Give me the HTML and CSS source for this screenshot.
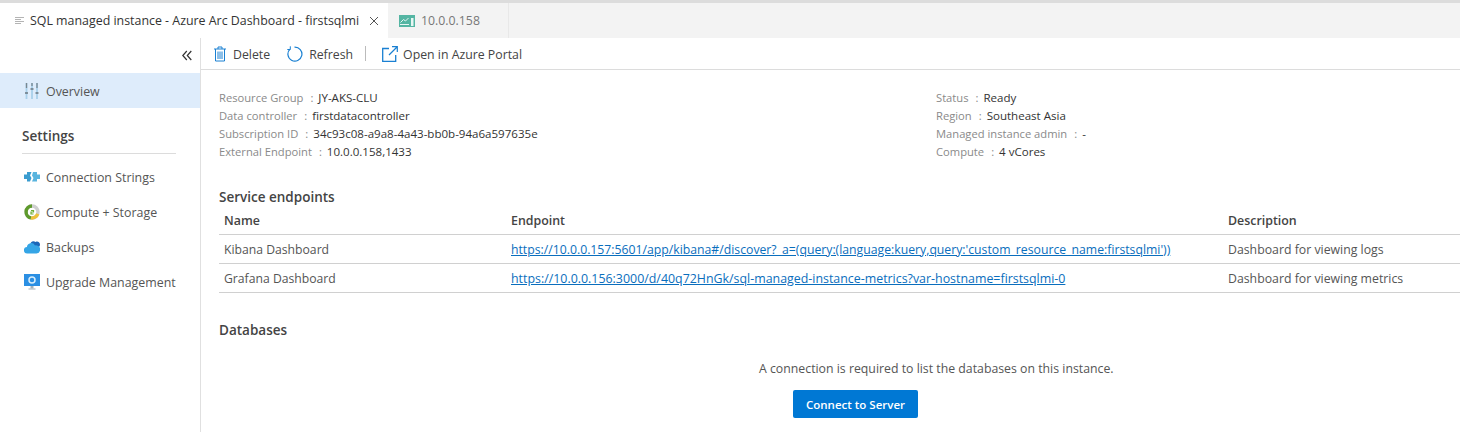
FILE: index.html
```html
<!DOCTYPE html>
<html lang="en">
<head>
<meta charset="utf-8">
<title>SQL managed instance</title>
<link rel="stylesheet" href="styles.css">
</head>
<body>
<div class="tabs">
  <div class="tab active">
    <svg class="tab-ico" width="10" height="8" viewBox="0 0 10 8"><path d="M0 .5h9M0 2.500h6M0 4.500h9M0 6.500h6" stroke="#b4b4b4" fill="none"/></svg>
    <span>SQL managed instance - Azure Arc Dashboard - firstsqlmi</span>
    <svg class="tab-x" width="10" height="10" viewBox="0 0 10 10"><path d="M1 1l8 8M9 1l-8 8" stroke="#555" fill="none"/></svg>
  </div>
  <div class="tab inactive">
    <svg width="16" height="12" viewBox="0 0 16 12"><rect width="16" height="12" fill="#55b5a3"/><path d="M1.500 7.500l3-3 2 1.500 3-3" stroke="#e8f6f3" fill="none"/><path d="M1 9.500h9" stroke="#e8f6f3"/><path d="M12 3h2.500v8H12z" fill="#e8f6f3"/></svg>
    <span>10.0.0.158</span>
  </div>
  <div class="tab-rest"></div>
</div>
<div class="main">
  <aside class="side">
    <div class="collapse"><svg width="10" height="11" viewBox="0 0 10 11"><path d="M4.800 1L.8 5.500l4 4.500M9.300 1L5.300 5.500l4 4.500" stroke="#333" stroke-width="1.200" fill="none"/></svg></div>
    <div class="nav-item selected">
      <svg class="nav-ico" width="16" height="16" viewBox="0 0 16 16"><path d="M2.500 0v16M8 0v16M13 0v16" stroke="#a9d0ea" stroke-width="1.800"/><path d="M1 10h3M6.500 6h3M11.500 10h3" stroke="#6b7780" stroke-width="1.600"/><path d="M2.500 0v5M8 0v3M13 0v5" stroke="#7a8790" stroke-width="1.300"/></svg>
      <span>Overview</span>
    </div>
    <div class="side-head">Settings</div>
    <div class="nav-item">
      <svg class="nav-ico" width="16" height="16" viewBox="0 0 16 16"><path d="M0 5.500h3V3h4.500L6 6.500 7.500 9 6 12.500H3V10H0z" fill="#3a9ccf"/><path d="M16 5.500h-3V3H9L8 6.500 9.500 9 8 12.500h5V10h3z" fill="#59b4de"/></svg>
      <span>Connection Strings</span>
    </div>
    <div class="nav-item">
      <svg class="nav-ico" width="16" height="16" viewBox="0 0 16 16"><circle cx="8" cy="8" r="6" fill="#fff" stroke="#cfcfcf" stroke-width="3.400"/><path d="M8 2a6 6 0 0 0-1 11.900" stroke="#5e9a2c" stroke-width="3.400" fill="none"/><path d="M7 13.900a6 6 0 0 0 6.700-4" stroke="#f0bf2a" stroke-width="3.400" fill="none" opacity=".9"/><path d="M7 6.500h2.500v1.500H7v2h2.500" stroke="#6fae35" stroke-width="1.200" fill="none"/></svg>
      <span>Compute + Storage</span>
    </div>
    <div class="nav-item">
      <svg class="nav-ico" width="16" height="16" viewBox="0 0 16 16"><path d="M6.500 5.500a3 3 0 0 1 5-2.500l1-.5a3 3 0 0 1 3.500 3A3 3 0 0 1 13 8.500H8z" fill="#1b66b8"/><path d="M3.500 14.500a3.300 3.300 0 0 1-.6-6.600 4.300 4.300 0 0 1 8.100-1.400 3 3 0 0 1 2 .1 4 4 0 0 1-.5 7.900z" fill="#35a5e6"/></svg>
      <span>Backups</span>
    </div>
    <div class="nav-item">
      <svg class="nav-ico" width="16" height="16" viewBox="0 0 16 16"><rect width="16" height="12" fill="#2b8fe3"/><circle cx="8" cy="6" r="3" fill="none" stroke="#d9eefb" stroke-width="1.500"/><path d="M6.500 12h3v2.500h-3z" fill="#a4b0b8"/><path d="M4.500 15h7" stroke="#a4b0b8"/></svg>
      <span>Upgrade Management</span>
    </div>
  </aside>
  <main class="content">
    <div class="toolbar">
      <div class="tool">
        <svg width="14" height="16" viewBox="0 0 14 16"><path d="M1 3h12M5 3V1h4v2M2.500 3v12h9V3M5 5.500v7.500M7 5.500v7.500M9 5.500v7.500" stroke="#1a80d2" fill="none"/></svg>
        <span>Delete</span>
      </div>
      <div class="tool">
        <svg width="16" height="16" viewBox="0 0 16 16"><path d="M7.500 1.100A7 7 0 1 1 3 3.100" stroke="#1a80d2" stroke-width="1.200" fill="none"/><path d="M3.300 .3v3.200H.3" stroke="#1a80d2" fill="none"/></svg>
        <span>Refresh</span>
      </div>
      <div class="sep"></div>
      <div class="tool tight">
        <svg width="16" height="16" viewBox="0 0 16 16"><path d="M7 2.500H.7v13h13V9" stroke="#1a80d2" stroke-width="1.300" fill="none"/><path d="M7 9l8-8M10 .7h5.300V6" stroke="#1a80d2" stroke-width="1.200" fill="none"/></svg>
        <span>Open in Azure Portal</span>
      </div>
    </div>
    <div class="body">
      <div class="props">
        <dl class="prop-col left">
          <div class="prop"><dt>Resource Group</dt><dd>JY-AKS-CLU</dd></div>
          <div class="prop"><dt>Data controller</dt><dd>firstdatacontroller</dd></div>
          <div class="prop"><dt>Subscription ID</dt><dd>34c93c08-a9a8-4a43-bb0b-94a6a597635e</dd></div>
          <div class="prop"><dt>External Endpoint</dt><dd>10.0.0.158,1433</dd></div>
        </dl>
        <dl class="prop-col">
          <div class="prop"><dt>Status</dt><dd>Ready</dd></div>
          <div class="prop"><dt>Region</dt><dd>Southeast Asia</dd></div>
          <div class="prop"><dt>Managed instance admin</dt><dd>-</dd></div>
          <div class="prop"><dt>Compute</dt><dd>4 vCores</dd></div>
        </dl>
      </div>
      <h2 class="section first">Service endpoints</h2>
      <div class="table">
        <div class="row head"><div>Name</div><div>Endpoint</div><div>Description</div></div>
        <div class="row"><div>Kibana Dashboard</div><div><a class="link-long" href="#">https://10.0.0.157:5601/app/kibana#/discover?_a=(query:(language:kuery,query:'custom_resource_name:firstsqlmi'))</a></div><div class="desc">Dashboard for viewing logs</div></div>
        <div class="row"><div>Grafana Dashboard</div><div><a class="link-short" href="#">https://10.0.0.156:3000/d/40q72HnGk/sql-managed-instance-metrics?var-hostname=firstsqlmi-0</a></div><div class="desc">Dashboard for viewing metrics</div></div>
      </div>
      <h2 class="section second">Databases</h2>
      <div class="connect">
        <p>A connection is required to list the databases on this instance.</p>
        <button class="btn">Connect to Server</button>
      </div>
    </div>
  </main>
</div>
</body>
</html>
```
FILE: styles.css
```css
* { box-sizing: border-box; }
html, body { margin: 0; padding: 0; }
body {
  width: 1460px; height: 432px; overflow: hidden; background: #fff;
  font-family: "Open Sans", "Noto Sans", sans-serif; font-size: 12.3px; color: #444;
  border-top: 3px solid #dcdcdc;
}
svg { flex: none; display: block; }
.tabs { display: flex; height: 35px; background: #f3f3f3; }
.tab { display: flex; align-items: center; height: 35px; white-space: nowrap; }
.tab.active { width: 388px; background: #fff; padding-left: 15px; gap: 5px; color: #333; font-size: 12.4px; }
.tab.active .tab-x { margin-left: 5px; }
.tab.inactive { width: 121px; padding-left: 11px; gap: 6px; color: #777; border-right: 1px solid #e8e8e8; }
.tab-rest { flex: 1; }
.main { display: flex; height: 394px; }
.side { width: 201px; border-right: 1px solid #e0e0e0; flex: none; }
.collapse { display: flex; justify-content: flex-end; padding: 12px 8px 0 0; height: 35px; }
.nav-item { display: flex; align-items: center; height: 35px; padding-left: 24px; gap: 6px; color: #555; white-space: nowrap; font-size: 12.4px; }
.nav-item span { padding-top: 2px; }
.nav-item.selected { background: #deecfb; }
.nav-ico { width: 16px; height: 16px; }
.side-head { margin: 19px 25px 5px 22px; height: 27px; border-bottom: 1px solid #dcdcdc; font-size: 13.5px; font-weight: 600; color: #444; width: 154px; }
.content { flex: 1; min-width: 0; }
.toolbar { display: flex; align-items: center; height: 32px; border-bottom: 1px solid #dcdcdc; padding-left: 12px; }
.tool { display: flex; align-items: center; gap: 6px; margin-right: 17px; color: #444; }
.tool span { padding-top: 2px; }
.tool.tight { gap: 5px; }
.sep { width: 1px; height: 15px; background: #bbb; margin-right: 16px; margin-left: -5px; }
.body { padding: 18px 0 0 18px; }
.props { display: flex; }
.prop-col { margin: 0; }
.prop-col.left { width: 717px; }
.prop { display: flex; height: 18px; align-items: center; font-size: 11.2px; white-space: nowrap; }
dt { color: #8a8a8a; }
dt::after { content: ":"; margin: 0 5px 0 7px; }
dd { margin: 0; color: #333; font-size: 11.55px; }
.section { font-size: 13.5px; font-weight: 600; color: #444; margin: 0; }
.section.first { margin-top: 28px; height: 18px; line-height: 18px; }
.section.second { margin-top: 28px; height: 18px; line-height: 18px; }
.row { display: grid; grid-template-columns: 287px 717px 1fr; height: 29px; align-items: center; border-bottom: 1px solid #d0d0d0; padding-left: 5px; white-space: nowrap; color: #555; font-size: 12.2px; }
.row.head { font-weight: 600; color: #444; font-size: 12.4px; }
.desc { font-size: 12.3px; }
a { color: #0a6ebd; }
.link-long { font-size: 12.24px; }
.link-short { font-size: 12.4px; }
.connect { display: flex; flex-direction: column; align-items: flex-start; margin-top: 21px; padding-left: 540px; }
.connect p { margin: 0 0 12px 0; height: 18px; line-height: 18px; color: #555; }
.btn { margin-left: 34px; width: 125px; height: 28px; background: #0078d4; color: #fff; border: 0; border-radius: 2px; font: 600 11.5px "Open Sans", sans-serif; padding: 0; }
```
